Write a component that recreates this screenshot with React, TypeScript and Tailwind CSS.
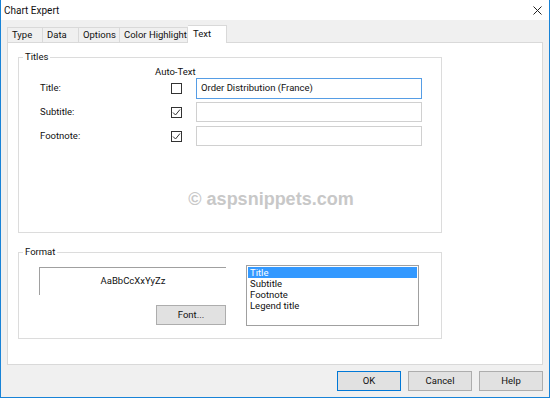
import React from "react";

const ui = { fontFamily: "Roboto, 'Noto Sans', sans-serif" };

function Check({ checked }: { checked?: boolean }) {
  return (
    <div className="w-[11px] h-[11px] border border-[#333] bg-white flex items-center justify-center">
      {checked && (
        <svg width="9" height="9" viewBox="0 0 9 9">
          <path d="M1 4.5 L3.5 7 L8 1.5" fill="none" stroke="#333" strokeWidth="1" />
        </svg>
      )}
    </div>
  );
}

function TitleRow({ label, checked, value, focused }: { label: string; checked?: boolean; value?: string; focused?: boolean }) {
  return (
    <div className="flex items-center h-[20px]">
      <div className="w-[152px] pl-[21px] text-[9.5px] text-[#111]">{label}</div>
      <div className="w-[25px]">
        <Check checked={checked} />
      </div>
      <div
        className={
          focused
            ? "w-[226px] h-[21px] border border-[#569de5] bg-white flex items-center px-[4px] text-[9.5px] text-[#111]"
            : "w-[226px] h-[20px] border border-[#d0d0d0] bg-white"
        }
      >
        {value}
      </div>
    </div>
  );
}

function Btn({ label, primary }: { label: string; primary?: boolean }) {
  return (
    <button
      className={
        "w-[64px] h-[20px] bg-[#e1e1e1] text-[9.5px] text-[#111] flex items-center justify-center " +
        (primary ? "border border-[#0078d7]" : "border border-[#adadad]")
      }
    >
      {label}
    </button>
  );
}

export default function App() {
  return (
    <div style={ui} className="relative w-[550px] h-[398px] bg-[#f0f0f0] border-l border-r border-b border-[#1883d7] flex flex-col overflow-hidden">
      {/* title bar */}
      <div className="h-[20px] bg-white flex items-center justify-between pl-[3px] pr-[7px]">
        <span className="text-[10px] text-[#111]">Chart Expert</span>
        <svg width="9" height="9" viewBox="0 0 9 9">
          <path d="M0.5 0.5 L8.5 8.5 M8.5 0.5 L0.5 8.5" stroke="#222" strokeWidth="1" />
        </svg>
      </div>

      <div className="pl-[6px] pr-[6px] pt-[5px]">
        {/* tabs */}
        <div className="flex items-end h-[17px] text-[9.5px] text-[#111] relative z-10">
          <div className="w-[36px] h-[15px] border border-b-0 border-[#d9d9d9] flex items-center pl-[4px]">Type</div>
          <div className="w-[36px] h-[15px] border border-b-0 border-l-0 border-[#d9d9d9] flex items-center pl-[4px]">Data</div>
          <div className="w-[41px] h-[15px] border border-b-0 border-l-0 border-[#d9d9d9] flex items-center pl-[4px]">Options</div>
          <div className="w-[68px] h-[15px] border border-b-0 border-l-0 border-[#d9d9d9] flex items-center pl-[4px]">Color Highlight</div>
          <div className="w-[39px] h-[18px] -mb-px border border-b-0 border-l-0 border-[#d9d9d9] bg-white flex items-start pt-[1px] pl-[5px]">Text</div>
        </div>

        {/* panel */}
        <div className="w-[536px] h-[323px] bg-white border border-[#d9d9d9] pl-[10px] pt-[14px]">
          {/* Titles */}
          <div className="relative w-[424px] h-[176px] border border-[#dcdcdc]">
            <span className="absolute -top-[7px] left-[4px] bg-white px-[2px] text-[9.5px] leading-[12px] text-[#111]">Titles</span>
            <div className="pl-[136px] pt-[7px] h-[20px] text-[9.5px] text-[#111]">Auto-Text</div>
            <div className="flex flex-col gap-[4px]">
              <TitleRow label="Title:" value="Order Distribution (France)" focused />
              <TitleRow label="Subtitle:" checked />
              <TitleRow label="Footnote:" checked />
            </div>
          </div>

          {/* Format */}
          <div className="relative mt-[19px] w-[424px] h-[87px] border border-[#dcdcdc] flex items-start pl-[20px] pt-[12px]">
            <span className="absolute -top-[7px] left-[4px] bg-white px-[2px] text-[9.5px] leading-[12px] text-[#111]">Format</span>
            <div className="w-[187px] mt-[2px] flex flex-col items-end">
              <div className="w-[187px] h-[28px] border-t border-l border-[#a0a0a0] flex items-center justify-center text-[9.5px] text-[#111]">
                AaBbCcXxYyZz
              </div>
              <button className="mt-[10px] w-[70px] h-[20px] bg-[#e1e1e1] border border-[#adadad] text-[9.5px] text-[#111] flex items-center justify-center">
                Font...
              </button>
            </div>
            <div className="ml-[20px] w-[173px] h-[61px] border border-[#a0a0a0] p-px text-[9.5px] leading-[11px] text-[#111]">
              <div className="bg-[#3399ff] text-white pl-[2px]">Title</div>
              <div className="pl-[2px]">Subtitle</div>
              <div className="pl-[2px]">Footnote</div>
              <div className="pl-[2px]">Legend title</div>
            </div>
          </div>
        </div>

        {/* buttons */}
        <div className="flex justify-end gap-[7px] mt-[6px] pr-[0px]">
          <Btn label="OK" primary />
          <Btn label="Cancel" />
          <Btn label="Help" />
        </div>
      </div>

      {/* watermark */}
      <div
        className="absolute left-0 right-[8px] top-[186px] text-center text-[18px] font-bold text-[#c8c8c8]"
        style={{ fontFamily: "'Liberation Sans', Arial, sans-serif" }}
      >
        © aspsnippets.com
      </div>
    </div>
  );
}
